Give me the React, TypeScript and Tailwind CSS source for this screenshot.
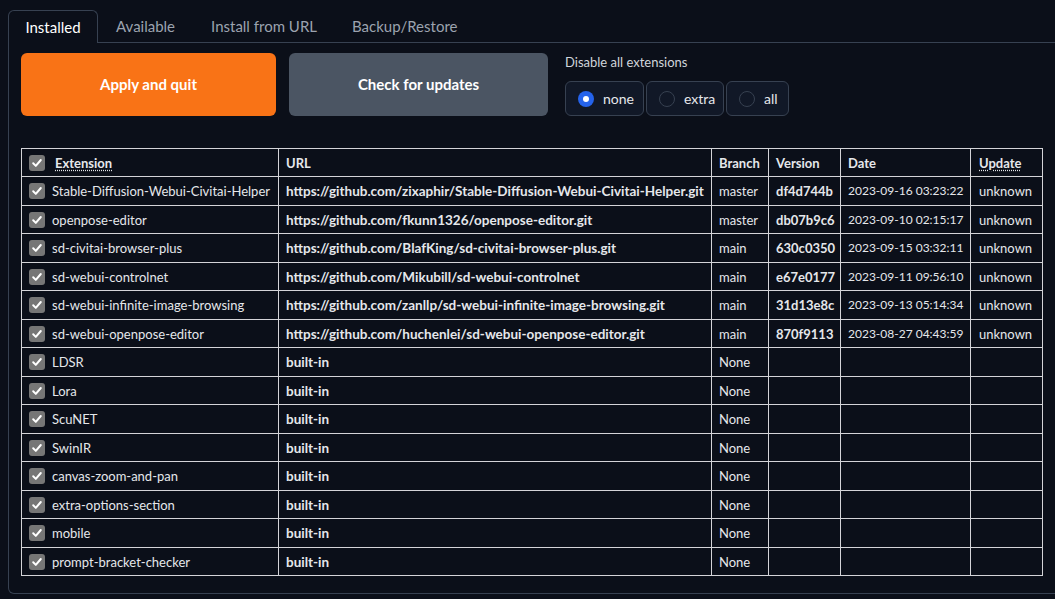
import React from "react";

const rows: [string, string, string, string, string, string][] = [
  ["Stable-Diffusion-Webui-Civitai-Helper", "https://github.com/zixaphir/Stable-Diffusion-Webui-Civitai-Helper.git", "master", "df4d744b", "2023-09-16 03:23:22", "unknown"],
  ["openpose-editor", "https://github.com/fkunn1326/openpose-editor.git", "master", "db07b9c6", "2023-09-10 02:15:17", "unknown"],
  ["sd-civitai-browser-plus", "https://github.com/BlafKing/sd-civitai-browser-plus.git", "main", "630c0350", "2023-09-15 03:32:11", "unknown"],
  ["sd-webui-controlnet", "https://github.com/Mikubill/sd-webui-controlnet", "main", "e67e0177", "2023-09-11 09:56:10", "unknown"],
  ["sd-webui-infinite-image-browsing", "https://github.com/zanllp/sd-webui-infinite-image-browsing.git", "main", "31d13e8c", "2023-09-13 05:14:34", "unknown"],
  ["sd-webui-openpose-editor", "https://github.com/huchenlei/sd-webui-openpose-editor.git", "main", "870f9113", "2023-08-27 04:43:59", "unknown"],
  ["LDSR", "built-in", "None", "", "", ""],
  ["Lora", "built-in", "None", "", "", ""],
  ["ScuNET", "built-in", "None", "", "", ""],
  ["SwinIR", "built-in", "None", "", "", ""],
  ["canvas-zoom-and-pan", "built-in", "None", "", "", ""],
  ["extra-options-section", "built-in", "None", "", "", ""],
  ["mobile", "built-in", "None", "", "", ""],
  ["prompt-bracket-checker", "built-in", "None", "", "", ""],
];

function Check() {
  return (
    <span className="inline-flex w-4 h-4 shrink-0 items-center justify-center rounded-[3px] bg-[#767676]">
      <svg width="12" height="12" viewBox="0 0 12 12">
        <path d="M2.2 6.3 L4.8 8.9 L9.8 3" fill="none" stroke="white" strokeWidth="2" strokeLinecap="round" strokeLinejoin="round" />
      </svg>
    </span>
  );
}

const td = "border border-[#d4d4d8] px-[7px] align-middle whitespace-nowrap overflow-hidden";

export default function App() {
  return (
    <div className="w-[1055px] h-[599px] overflow-hidden bg-[#0b0f19] text-[#e5e7eb] font-['Lato','Liberation_Sans',sans-serif] relative">
      <div className="pt-[10px] pl-[8px]">
        {/* tabs */}
        <div className="flex items-end h-[33px]">
          <div className="h-[33px] w-[90px] border border-b-0 border-[#374151] rounded-t-[6px] flex items-center justify-center text-[15px] text-white">
            Installed
          </div>
          <div className="flex-1 h-[33px] border-b border-[#374151] flex items-center text-[15px] text-[#9ca3af]">
            <span className="ml-[18px]">Available</span>
            <span className="ml-[36px]">Install from URL</span>
            <span className="ml-[35px]">Backup/Restore</span>
          </div>
        </div>
        {/* panel */}
        <div className="border border-t-0 border-[#374151] rounded-bl-[6px] mr-[-20px] h-[551px] pl-[12px] pt-[10px]">
          <div className="flex">
            <button className="w-[255px] h-[63px] rounded-[6px] bg-[#f97316] text-white font-bold text-[15px]">
              Apply and quit
            </button>
            <button className="ml-[13px] w-[259px] h-[63px] rounded-[6px] bg-[#4b5563] text-white font-bold text-[15px]">
              Check for updates
            </button>
            <div className="ml-[17px]">
              <div className="text-[13px] text-[#d1d5db] leading-[18px]">Disable all extensions</div>
              <div className="flex mt-[10px] gap-[2px]">
                {[
                  ["none", true, 79],
                  ["extra", false, 78],
                  ["all", false, 63],
                ].map(([label, on, w]) => (
                  <div
                    key={label as string}
                    style={{ width: w as number }}
                    className="h-[35px] rounded-[6px] border border-[#374151] bg-[#111827] flex items-center pl-[12px] gap-[9px] text-[14px] text-[#e5e7eb]"
                  >
                    {on ? (
                      <span className="w-4 h-4 rounded-full bg-[#2563eb] flex items-center justify-center">
                        <span className="w-[6px] h-[6px] rounded-full bg-white" />
                      </span>
                    ) : (
                      <span className="w-4 h-4 rounded-full border border-[#374151] bg-[#111827]" />
                    )}
                    <span>{label as string}</span>
                  </div>
                ))}
              </div>
            </div>
          </div>
          <table className="mt-[32px] border-collapse table-fixed w-[1021px] text-[13px] leading-[18px]">
            <colgroup>
              <col className="w-[257px]" />
              <col className="w-[433px]" />
              <col className="w-[57px]" />
              <col className="w-[72px]" />
              <col className="w-[130px]" />
              <col className="w-[72px]" />
            </colgroup>
            <thead>
              <tr className="h-[28px] font-bold text-left">
                <th className={td + " font-bold"}>
                  <div className="flex items-center gap-[10px]">
                    <Check />
                    <abbr className="underline decoration-dotted underline-offset-2">Extension</abbr>
                  </div>
                </th>
                <th className={td}>URL</th>
                <th className={td + " px-[6px]"}>Branch</th>
                <th className={td}>Version</th>
                <th className={td}>Date</th>
                <th className={td + " px-[8px]"}>
                  <abbr className="underline decoration-dotted underline-offset-2">Update</abbr>
                </th>
              </tr>
            </thead>
            <tbody>
              {rows.map((r, i) => (
                <tr key={i} className={i % 2 === 0 ? "h-[29px]" : "h-[28px]"}>
                  <td className={td}>
                    <div className="flex items-center gap-[7px]">
                      <Check />
                      <span>{r[0]}</span>
                    </div>
                  </td>
                  <td className={td + " font-bold text-[13.5px]"}>{r[1]}</td>
                  <td className={td + " px-[6px]"}>{r[2]}</td>
                  <td className={td + " font-bold"}>{r[3]}</td>
                  <td className={td + " text-[12px]"}>{r[4]}</td>
                  <td className={td + " px-[8px]"}>{r[5]}</td>
                </tr>
              ))}
            </tbody>
          </table>
        </div>
      </div>
    </div>
  );
}
